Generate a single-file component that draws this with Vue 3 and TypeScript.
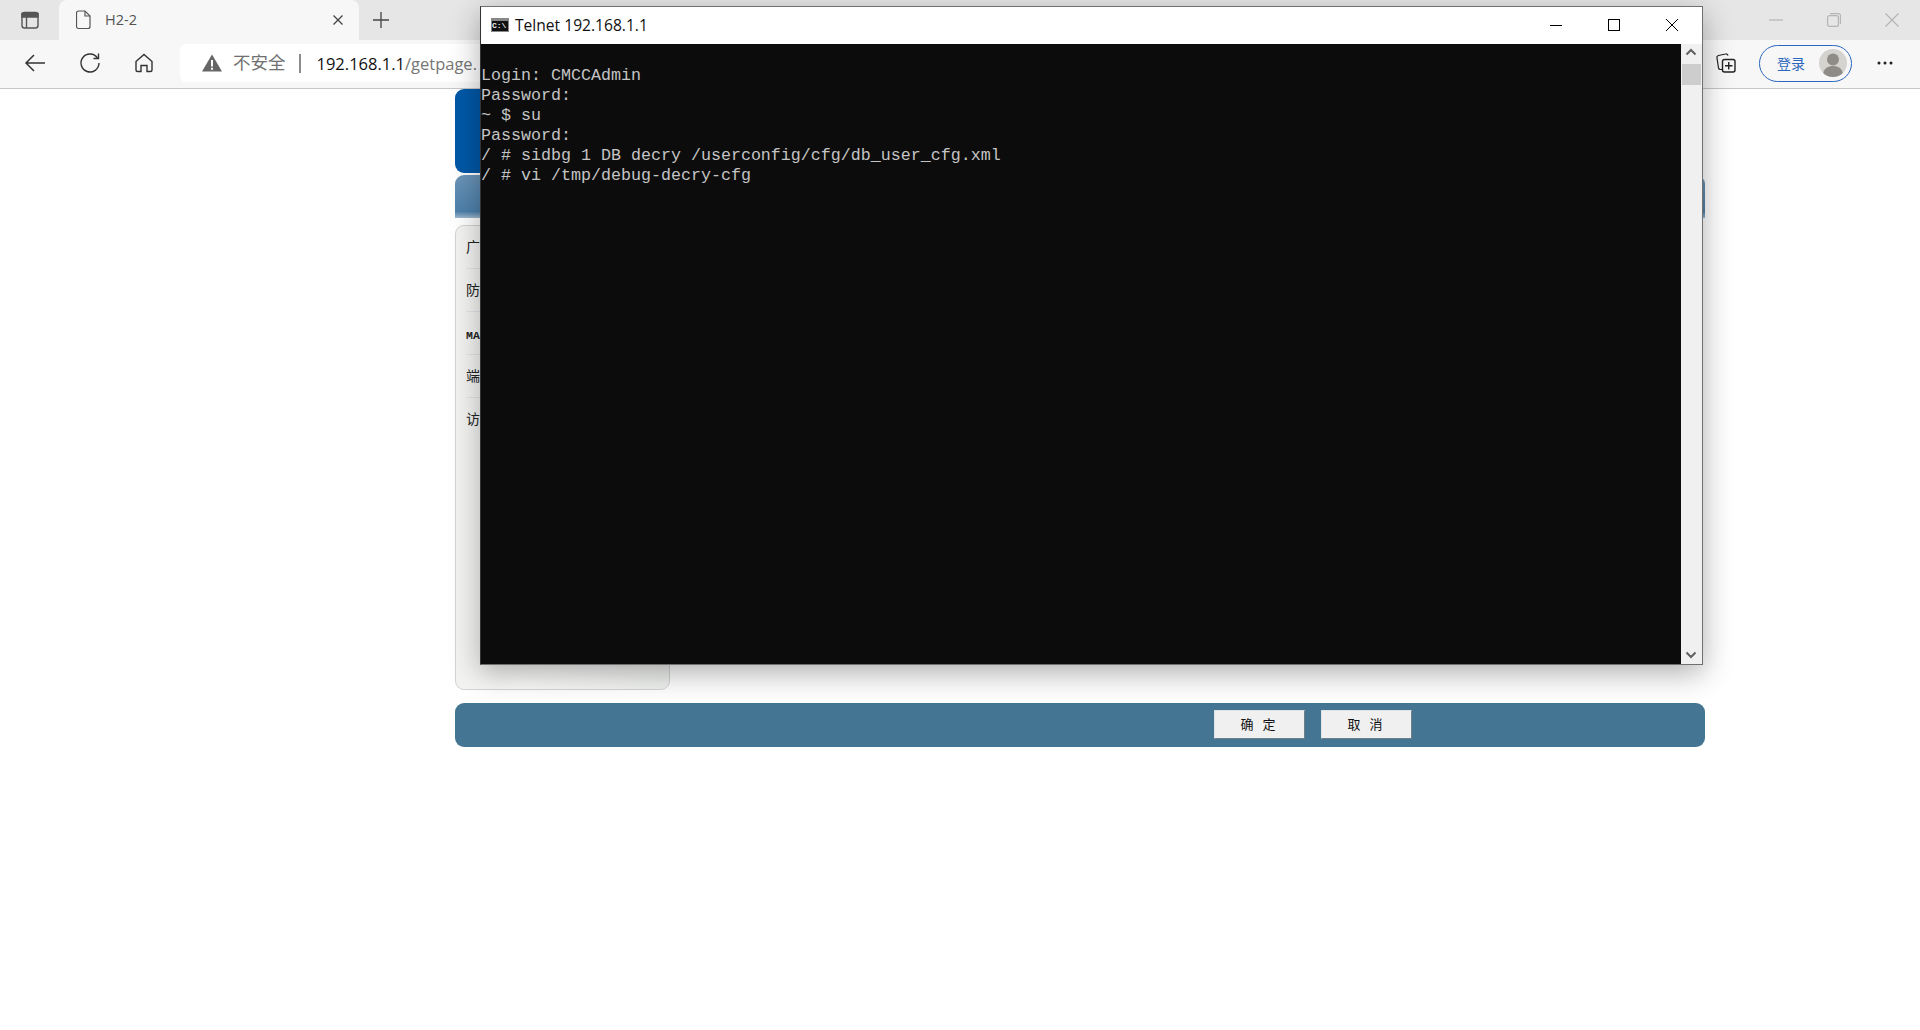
<script setup lang="ts">
const lines: string[] = [
  'Login: CMCCAdmin',
  'Password:',
  '~ $ su',
  'Password:',
  '/ # sidbg 1 DB decry /userconfig/cfg/db_user_cfg.xml',
  '/ # vi /tmp/debug-decry-cfg',
]
const menu: string[] = ['广', '防', 'MA', '端', '访']
</script>

<template>
  <div class="screen">
    <header class="tabstrip">
      <svg class="tabs-icon" width="20" height="20" viewBox="0 0 20 20" fill="none" stroke="#555" stroke-width="1.4">
        <rect x="2" y="2.5" width="16" height="15.5" rx="2.5" />
        <path d="M6.5 7v11" />
        <path d="M2 3.5h16v3.5H2z" fill="#555" />
      </svg>
      <div class="tab">
        <svg width="16" height="20" viewBox="0 0 16 20" fill="none" stroke="#555" stroke-width="1.2">
          <path d="M2.5 1h6.5l5 5v10.5a2 2 0 0 1-2 2h-9.5a2 2 0 0 1-2-2V3a2 2 0 0 1 2-2z" />
          <path d="M9 1v5h5" />
        </svg>
        <span class="tab-title">H2-2</span>
        <svg class="tab-close" width="12" height="12" viewBox="0 0 12 12" stroke="#444" stroke-width="1.3">
          <path d="M1.5 1.5l9 9M10.5 1.5l-9 9" />
        </svg>
      </div>
      <svg class="new-tab" width="18" height="18" viewBox="0 0 18 18" stroke="#444" stroke-width="1.3">
        <path d="M9 1v16M1 9h16" />
      </svg>
      <div class="win-controls">
        <svg width="14" height="14" viewBox="0 0 14 14" stroke="#b5b5b5" stroke-width="1.2"><path d="M0 7h14" /></svg>
        <svg width="14" height="14" viewBox="0 0 14 14" fill="none" stroke="#b5b5b5" stroke-width="1.2">
          <rect x=".6" y="2.6" width="10.8" height="10.8" rx="2" />
          <path d="M3 .6h8.400a2 2 0 0 1 2 2V11" />
        </svg>
        <svg width="14" height="14" viewBox="0 0 14 14" stroke="#b5b5b5" stroke-width="1.2"><path d="M.5.5l13 13M13.500.5l-13 13" /></svg>
      </div>
    </header>

    <nav class="toolbar">
      <svg class="nav-icon" width="22" height="20" viewBox="0 0 22 20" fill="none" stroke="#333" stroke-width="1.5">
        <path d="M21 10H2M10 2l-8 8 8 8" />
      </svg>
      <svg class="nav-icon" width="22" height="22" viewBox="0 0 22 22" fill="none" stroke="#333" stroke-width="1.4">
        <path d="M18.500 6A9 9 0 1 0 20 11" />
        <path d="M19.500 1.500V6.500H14.500" />
      </svg>
      <svg class="nav-icon" width="20" height="20" viewBox="0 0 20 20" fill="none" stroke="#333" stroke-width="1.4">
        <path d="M2 8.500L10 1.500l8 7V17a1.500 1.500 0 0 1-1.500 1.500H13v-6H7v6H3.500A1.500 1.500 0 0 1 2 17z" />
      </svg>
      <div class="address">
        <svg width="20" height="18" viewBox="0 0 20 18">
          <path d="M10 0.500L20 17.500H0z" fill="#666" />
          <path d="M9 6h2v6.500H9zM9 13.800h2v2H9z" fill="#fff" />
        </svg>
        <span class="insecure">不安全</span>
        <span class="sep"></span>
        <span class="url"><span class="host">192.168.1.1</span>/getpage.</span>
      </div>
      <svg class="collections" width="20" height="20" viewBox="0 0 20 20" fill="none" stroke="#222" stroke-width="1.2">
        <path d="M6 16.500l-1.500 0a2 2 0 0 1-2-1.500L1 5a2 2 0 0 1 1.500-2.500L9.500 1a2 2 0 0 1 2.500 1.500" />
        <rect x="6.500" y="6.500" width="12.500" height="12.500" rx="2" stroke-width="1.400" />
        <path d="M12.750 9v7.500M9 12.750h7.500" stroke-width="1.400" />
      </svg>
      <div class="signin">
        <span>登录</span>
        <span class="avatar">
          <svg width="28" height="28" viewBox="0 0 28 28">
            <circle cx="14" cy="10.500" r="6" fill="#8f8c88" />
            <path d="M4 25c1-6 5-8 10-8s9 2 10 8a14 14 0 0 1-20 0z" fill="#8f8c88" />
          </svg>
        </span>
      </div>
      <svg class="more" width="16" height="4" viewBox="0 0 16 4" fill="#222">
        <circle cx="2" cy="2" r="1.500" /><circle cx="8" cy="2" r="1.500" /><circle cx="14" cy="2" r="1.500" />
      </svg>
    </nav>

    <main class="page">
      <div class="logo-band"></div>
      <div class="tab-band"></div>
      <aside class="side">
        <div v-for="item in menu" :key="item" class="side-item" :class="{ mono: item === 'MA' }">{{ item }}</div>
      </aside>
      <div class="actions">
        <button class="btn" type="button">确 定</button>
        <button class="btn" type="button">取 消</button>
      </div>
    </main>

    <section class="telnet">
      <div class="titlebar">
        <span class="cmd-icon">C:\</span>
        <span class="title">Telnet 192.168.1.1</span>
        <div class="title-controls">
          <svg width="12" height="12" viewBox="0 0 12 12" stroke="#000" stroke-width="1"><path d="M0 6.500h12" /></svg>
          <svg width="12" height="12" viewBox="0 0 12 12" fill="none" stroke="#000" stroke-width="1"><rect x=".5" y=".5" width="11" height="11" /></svg>
          <svg width="12" height="12" viewBox="0 0 12 12" stroke="#000" stroke-width="1"><path d="M0 0l12 12M12 0L0 12" /></svg>
        </div>
      </div>
      <div class="console">
        <pre class="term"><template v-for="line in lines" :key="line">{{ line }}
</template></pre>
        <div class="scrollbar">
          <svg width="12" height="8" viewBox="0 0 12 8" fill="none" stroke="#606060" stroke-width="2"><path d="M1.500 6.500L6 2l4.500 4.500" /></svg>
          <div class="thumb"></div>
          <div class="track"></div>
          <svg width="12" height="8" viewBox="0 0 12 8" fill="none" stroke="#606060" stroke-width="2"><path d="M1.500 1.500L6 6l4.500-4.500" /></svg>
        </div>
      </div>
    </section>
  </div>
</template>

<style scoped>
.screen {
  position: relative;
  width: 1920px;
  height: 1030px;
  overflow: hidden;
  background: #fff;
  font-family: "Open Sans", "Noto Sans CJK SC", sans-serif;
}
.tabstrip {
  display: flex;
  align-items: center;
  height: 40px;
  background: #e6e6e6;
}
.tabs-icon { margin-left: 20px; }
.tab {
  display: flex;
  align-items: center;
  box-sizing: border-box;
  width: 300px;
  height: 40px;
  margin-left: 19px;
  padding: 0 15px 0 17px;
  background: #f7f7f7;
  border-radius: 8px 8px 0 0;
}
.tab-title {
  flex: 1;
  margin: 0 0 2px 13px;
  font-size: 14.500px;
  color: #555;
}
.new-tab { margin-left: 13px; }
.win-controls {
  display: flex;
  gap: 44px;
  margin-left: auto;
  margin-right: 21px;
}
.toolbar {
  display: flex;
  align-items: center;
  box-sizing: border-box;
  height: 49px;
  padding: 0 0 2px 24px;
  background: #f7f7f7;
  border-bottom: 1px solid #c6c6c6;
}
.nav-icon { flex: none; margin-right: 33px; }
.address {
  display: flex;
  align-items: center;
  flex: none;
  box-sizing: border-box;
  width: 1480px;
  height: 38px;
  margin-left: -7px;
  padding-left: 22px;
  background: #fff;
  border-radius: 6px;
  white-space: nowrap;
}
.insecure { margin: 0 0 3px 11px; font-size: 17.500px; color: #707070; }
.sep { width: 2px; height: 19px; margin: 0 16px 0 13px; background: #8c8c8c; }
.url { font-size: 16.500px; color: #767676; }
.host { color: #111; }
.collections { flex: none; margin-left: 56px; }
.signin {
  display: flex;
  align-items: center;
  justify-content: space-between;
  box-sizing: border-box;
  flex: none;
  width: 93px;
  height: 37px;
  margin-left: 23px;
  padding: 0 4px 0 17px;
  border: 1.500px solid #2b66bd;
  border-radius: 19px;
  font-size: 14px;
  color: #2b66bd;
}
.avatar {
  display: flex;
  width: 28px;
  height: 28px;
  border-radius: 50%;
  overflow: hidden;
  background: #d5d3cf;
}
.more { flex: none; margin-left: 25px; }
.page {
  display: flex;
  flex-direction: column;
  width: 1250px;
  margin: 0 0 0 455px;
}
.logo-band {
  width: 1230px;
  height: 84px;
  background: #0058a8;
  border-radius: 9px;
}
.tab-band {
  height: 43px;
  margin-top: 2px;
  background: linear-gradient(180deg, #6b94b8 0%, #4d81ab 85%, #9fb9cf 100%);
  border-radius: 9px 9px 0 0;
}
.side {
  box-sizing: border-box;
  width: 215px;
  height: 465px;
  margin-top: 7px;
  padding: 0 10px;
  background: linear-gradient(90deg, #f3f4f2 0%, #fbfbfa 30%, #f0f2f0 100%);
  border: 1px solid #d4d4d4;
  border-radius: 9px;
}
.side-item {
  box-sizing: border-box;
  height: 43px;
  padding-top: 11px;
  font-size: 14px;
  line-height: 20px;
  color: #222;
  border-bottom: 1px solid #e3e6ea;
  white-space: nowrap;
}
.side-item:nth-child(5) { border-bottom: 0; }
.mono {
  padding-top: 14px;
  font-family: "Liberation Mono", monospace;
  font-size: 11.500px;
  font-weight: 700;
}
.actions {
  display: flex;
  align-items: center;
  gap: 16px;
  height: 44px;
  margin-top: 13px;
  padding: 0 0 1px 759px;
  box-sizing: border-box;
  background: #447593;
  border-radius: 9px;
}
.btn {
  width: 91px;
  height: 29px;
  padding: 0 0 3px;
  background: #f0f0f0;
  border: 1px solid #6e7f8a;
  border-top-color: #dfe3e6;
  border-left-color: #dfe3e6;
  border-radius: 1px;
  font-family: "Noto Sans CJK SC", sans-serif;
  font-size: 13px;
  letter-spacing: 3px;
  color: #111;
}
.telnet {
  position: absolute;
  left: 480px;
  top: 6px;
  box-sizing: border-box;
  width: 1223px;
  height: 659px;
  display: flex;
  flex-direction: column;
  border: 1px solid #707070;
  border-left-color: #333;
  box-shadow: 0 8px 28px rgba(0, 0, 0, 0.32);
}
.titlebar {
  display: flex;
  align-items: center;
  flex: none;
  height: 37px;
  padding: 0 0 2px 10px;
  box-sizing: border-box;
  background: #fff;
}
.cmd-icon {
  width: 18px;
  height: 14px;
  background: #111;
  border: 1px solid #888;
  border-top-width: 3px;
  box-sizing: border-box;
  font: 700 8px/10px "Liberation Mono", monospace;
  color: #eee;
  overflow: hidden;
}
.title {
  margin-left: 6px;
  font-family: "Open Sans", sans-serif;
  font-size: 15.600px;
  color: #111;
}
.title-controls {
  display: flex;
  gap: 46px;
  margin-left: auto;
  margin-right: 24px;
}
.console {
  display: flex;
  flex: 1;
  min-height: 0;
  background: #0c0c0c;
}
.term {
  flex: 1;
  margin: 0;
  padding-top: 22px;
  font-family: "Liberation Mono", monospace;
  font-size: 16.670px;
  line-height: 20px;
  color: #c4c4c4;
}
.scrollbar {
  display: flex;
  flex-direction: column;
  align-items: center;
  flex: none;
  width: 21px;
  padding: 4px 2px 5px 0;
  box-sizing: border-box;
  background: #f0f0f0;
}
.thumb {
  width: 19px;
  height: 21px;
  margin: 8px -2px 0 0;
  background: #cdcdcd;
}
.track { flex: 1; }
</style>
